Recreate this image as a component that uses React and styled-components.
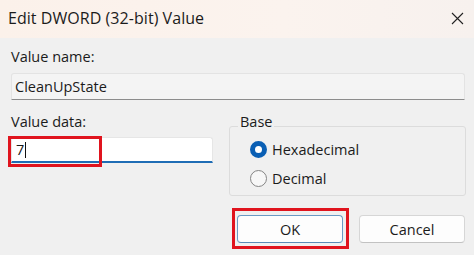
import React from "react";
import styled, { createGlobalStyle } from "styled-components";

const Global = createGlobalStyle`
  html, body { margin: 0; padding: 0; background: #f0f0f0; }
  body { font-family: "Open Sans", "Noto Sans", sans-serif; color: #1a1a1a; }
`;

const Window = styled.div`
  position: relative;
  width: 474px;
  height: 255px;
  overflow: hidden;
  background: #f0f0f0;
  display: flex;
  flex-direction: column;
`;

const TitleBar = styled.div`
  height: 38px;
  flex: none;
  box-sizing: border-box;
  display: flex;
  align-items: center;
  justify-content: space-between;
  padding: 0 10px 2px 8px;
  background: linear-gradient(90deg, #fbf1ea 0%, #fbf3ee 60%, #f7f1ee 100%);
`;

const Title = styled.span`
  font-size: 16px;
  color: #1b1b1b;
  letter-spacing: 0.05px;
`;

const CloseIcon = styled.svg`
  width: 13px;
  height: 13px;
`;

const Body = styled.div`
  flex: 1;
  padding: 9px 8px 0 11px;
  display: flex;
  flex-direction: column;
`;

const Label = styled.div`
  font-size: 14.5px;
  line-height: 20px;
  color: #1b1b1b;
`;

const NameField = styled.div`
  margin-top: 6px;
  height: 27px;
  box-sizing: border-box;
  border: 1px solid #e3e3e3;
  border-bottom: 1px solid #8c8c8c;
  border-radius: 3px 3px 0 0;
  background: #f4f4f4;
  display: flex;
  align-items: center;
  padding-left: 3px;
  font-size: 14.5px;
  color: #1b1b1b;
  margin-right: 1px;
`;

const Row = styled.div`
  margin-top: 12px;
  display: grid;
  grid-template-columns: 202px 1fr;
  column-gap: 16px;
`;

const DataCol = styled.div`
  display: flex;
  flex-direction: column;
`;

const DataField = styled.div`
  margin-top: 5px;
  height: 26px;
  box-sizing: border-box;
  background: #ffffff;
  border: 1px solid #e6e6e6;
  border-bottom: 2px solid #1f6db5;
  border-radius: 3px 3px 0 0;
  display: flex;
  align-items: center;
  padding-left: 4px;
  font-size: 14.5px;
`;

const Caret = styled.span`
  display: inline-block;
  width: 1px;
  height: 16px;
  background: #111;
  margin-left: 1px;
`;

const GroupBox = styled.fieldset`
  margin: 2px 0 0 0;
  padding: 0 0 6px 20px;
  box-sizing: border-box;
  border: 1px solid #dcdcdc;
  border-radius: 3px;
  display: flex;
  flex-direction: column;
  gap: 7px;
  min-width: 0;
`;

const Legend = styled.legend`
  font-size: 14.5px;
  line-height: 16px;
  padding: 0 2px 8px 2px;
  margin-left: -12px;
  color: #1b1b1b;
`;

const RadioRow = styled.div`
  display: flex;
  align-items: center;
  gap: 5px;
  height: 22px;
  font-size: 14.5px;
  color: #1b1b1b;
`;

const RadioCircle = styled.span`
  width: 17px;
  height: 17px;
  box-sizing: border-box;
  border-radius: 50%;
  flex: none;
  ${(p) =>
    p.$checked
      ? `background: #ffffff; border: 5.5px solid #0a5fb4;`
      : `background: #f7f7f7; border: 1px solid #858585;`}
`;

const ButtonRow = styled.div`
  margin-top: 19px;
  display: flex;
  justify-content: flex-end;
  gap: 16px;
  padding-right: 1px;
`;

const Button = styled.div`
  width: 106px;
  height: 28px;
  box-sizing: border-box;
  border-radius: 4px;
  background: #fdfdfd;
  border: 1px solid ${(p) => (p.$default ? "#6b9ac4" : "#d6d6d6")};
  border-bottom-color: ${(p) => (p.$default ? "#5a8bb8" : "#c2c2c2")};
  display: flex;
  align-items: center;
  justify-content: center;
  font-size: 14.5px;
  color: #1b1b1b;
`;

const Highlight = styled.div`
  position: absolute;
  box-sizing: border-box;
  border: 3px solid #e0141e;
  left: ${(p) => p.$x}px;
  top: ${(p) => p.$y}px;
  width: ${(p) => p.$w}px;
  height: ${(p) => p.$h}px;
  pointer-events: none;
`;

export default function App() {
  return (
    <>
      <Global />
      <Window>
        <TitleBar>
          <Title>Edit DWORD (32-bit) Value</Title>
          <CloseIcon viewBox="0 0 13 13">
            <path d="M1 1 L12 12 M12 1 L1 12" stroke="#222" strokeWidth="1.1" />
          </CloseIcon>
        </TitleBar>
        <Body>
          <Label>Value name:</Label>
          <NameField>CleanUpState</NameField>
          <Row>
            <DataCol>
              <Label>Value data:</Label>
              <DataField>
                7<Caret />
              </DataField>
            </DataCol>
            <GroupBox>
              <Legend>Base</Legend>
              <RadioRow>
                <RadioCircle $checked />
                Hexadecimal
              </RadioRow>
              <RadioRow>
                <RadioCircle />
                Decimal
              </RadioRow>
            </GroupBox>
          </Row>
          <ButtonRow>
            <Button $default>OK</Button>
            <Button>Cancel</Button>
          </ButtonRow>
        </Body>
        <Highlight $x={8} $y={136} $w={94} $h={31} />
        <Highlight $x={232} $y={208} $w={117} $h={41} />
      </Window>
    </>
  );
}
